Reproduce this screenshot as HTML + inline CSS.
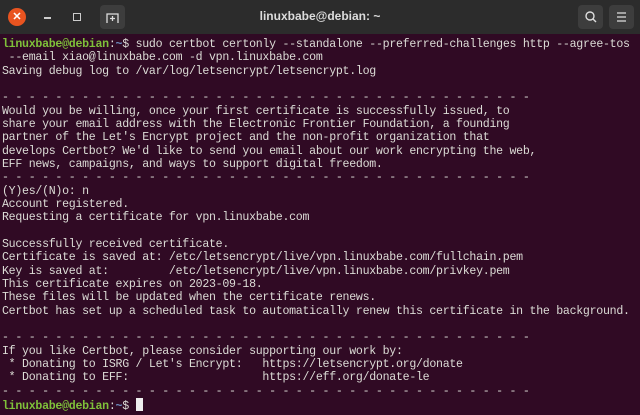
<!DOCTYPE html>
<html><head><meta charset="utf-8"><style>
html,body{margin:0;padding:0;width:640px;height:415px;overflow:hidden;background:#300a24}
.tb{position:absolute;left:0;top:0;width:640px;height:34px;background:#2c2c2c;}
.title{position:absolute;left:0;width:640px;top:9px;text-align:center;color:#dcdcdc;font:bold 12px "Liberation Sans",sans-serif}
.close{position:absolute;left:8px;top:8px;width:18px;height:18px;border-radius:50%;background:#e95420;color:#fff;font:bold 11px "Liberation Sans",sans-serif;text-align:center;line-height:18px}
.btn{position:absolute;top:5px;width:25px;height:24px;border-radius:4px;background:#3d3d3d}
pre{position:absolute;left:2px;top:38px;margin:0;font:11.6px/13.33px "Liberation Mono",monospace;letter-spacing:-0.28px;color:#dcdcd6;white-space:pre}
.g{color:#7fc13a;font-weight:bold}.b{color:#6e8fc0;font-weight:bold}
.cur{display:inline-block;width:7px;height:13px;background:#eee;vertical-align:-2px}
</style></head><body>
<div class="tb">
<div class="close">✕</div>
<div style="position:absolute;left:44px;top:17px;width:7px;height:1.5px;background:#ccc"></div>
<div style="position:absolute;left:73px;top:13px;width:6px;height:6px;border:1.2px solid #ccc"></div>
<div class="btn" style="left:100px"><svg width="25" height="24"><path d="M7 18V9h11v9M12.5 11v5M10 13.5h5" stroke="#ddd" stroke-width="1.3" fill="none"/></svg></div>
<div class="title">linuxbabe@debian: ~</div>
<div class="btn" style="left:578px"><svg width="25" height="24"><circle cx="12" cy="11" r="4" stroke="#ddd" stroke-width="1.4" fill="none"/><path d="M15 14l3 3" stroke="#ddd" stroke-width="1.4"/></svg></div>
<div class="btn" style="left:609px"><svg width="25" height="24"><path d="M8 8h9M8 12h9M8 16h9" stroke="#ddd" stroke-width="1.3"/></svg></div>
</div>
<pre><span class="g">linuxbabe@debian</span>:<span class="b">~</span>$ sudo certbot certonly --standalone --preferred-challenges http --agree-tos
 --email xiao@linuxbabe.com -d vpn.linuxbabe.com
Saving debug log to /var/log/letsencrypt/letsencrypt.log

- - - - - - - - - - - - - - - - - - - - - - - - - - - - - - - - - - - - - - - -
Would you be willing, once your first certificate is successfully issued, to
share your email address with the Electronic Frontier Foundation, a founding
partner of the Let's Encrypt project and the non-profit organization that
develops Certbot? We'd like to send you email about our work encrypting the web,
EFF news, campaigns, and ways to support digital freedom.
- - - - - - - - - - - - - - - - - - - - - - - - - - - - - - - - - - - - - - - -
(Y)es/(N)o: n
Account registered.
Requesting a certificate for vpn.linuxbabe.com

Successfully received certificate.
Certificate is saved at: /etc/letsencrypt/live/vpn.linuxbabe.com/fullchain.pem
Key is saved at:         /etc/letsencrypt/live/vpn.linuxbabe.com/privkey.pem
This certificate expires on 2023-09-18.
These files will be updated when the certificate renews.
Certbot has set up a scheduled task to automatically renew this certificate in the background.

- - - - - - - - - - - - - - - - - - - - - - - - - - - - - - - - - - - - - - - -
If you like Certbot, please consider supporting our work by:
 * Donating to ISRG / Let's Encrypt:   https://letsencrypt.org/donate
 * Donating to EFF:                    https://eff.org/donate-le
- - - - - - - - - - - - - - - - - - - - - - - - - - - - - - - - - - - - - - - -
<span class="g">linuxbabe@debian</span>:<span class="b">~</span>$ <span class="cur"></span></pre>
</body></html>
